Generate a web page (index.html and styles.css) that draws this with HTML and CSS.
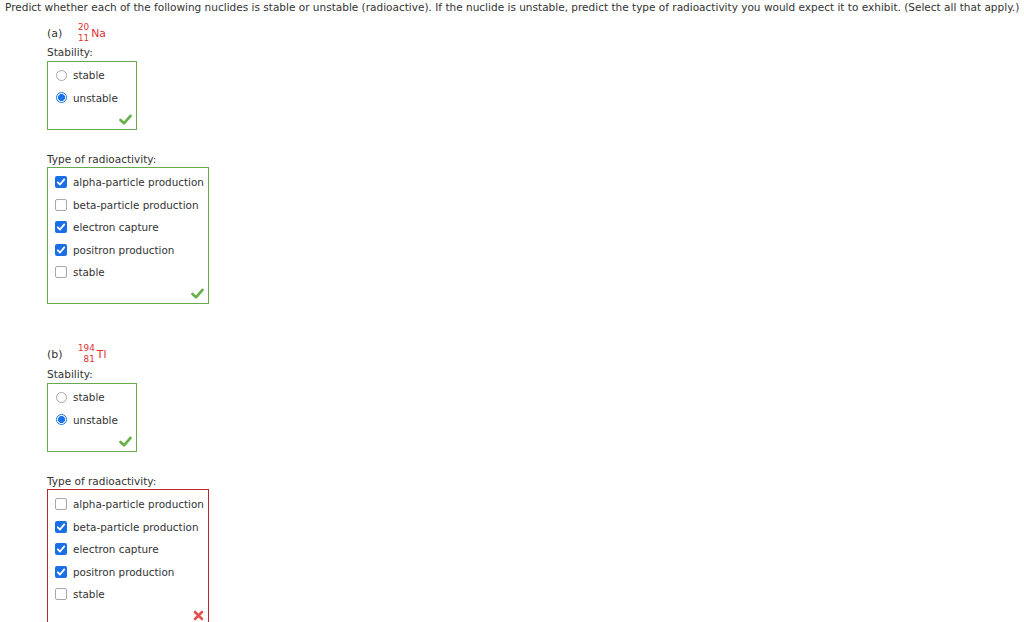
FILE: index.html
```html
<!DOCTYPE html>
<html>
<head>
<meta charset="utf-8">
<link rel="stylesheet" href="styles.css">
</head>
<body>
<p class="prompt">Predict whether each of the following nuclides is stable or unstable (radioactive). If the nuclide is unstable, predict the type of radioactivity you would expect it to exhibit. (Select all that apply.)</p>

<div class="part">
  <div class="part-head">
    <span class="part-label">(a)</span>
    <span class="nuclide"><span class="nums"><span>20</span><span>11</span></span><span class="sym">Na</span></span>
  </div>
  <div class="label">Stability:</div>
  <div class="box box-stab correct">
    <div class="opt"><span class="radio"></span>stable</div>
    <div class="opt"><span class="radio on"></span>unstable</div>
    <div class="mark"><svg width="13" height="11" viewBox="0 0 13 11"><path d="M1.5 6 L5 9.3 L11.5 1.8" fill="none" stroke="#66b04a" stroke-width="2.6" stroke-linecap="round" stroke-linejoin="round"/></svg></div>
  </div>
  <div class="label label-type">Type of radioactivity:</div>
  <div class="box box-type correct">
    <div class="opt"><span class="cb on"></span>alpha-particle production</div>
    <div class="opt"><span class="cb"></span>beta-particle production</div>
    <div class="opt"><span class="cb on"></span>electron capture</div>
    <div class="opt"><span class="cb on"></span>positron production</div>
    <div class="opt"><span class="cb"></span>stable</div>
    <div class="mark"><svg width="13" height="11" viewBox="0 0 13 11"><path d="M1.5 6 L5 9.3 L11.5 1.8" fill="none" stroke="#66b04a" stroke-width="2.6" stroke-linecap="round" stroke-linejoin="round"/></svg></div>
  </div>
</div>

<div class="part part-b">
  <div class="part-head">
    <span class="part-label">(b)</span>
    <span class="nuclide"><span class="nums"><span>194</span><span>81</span></span><span class="sym">Tl</span></span>
  </div>
  <div class="label">Stability:</div>
  <div class="box box-stab correct">
    <div class="opt"><span class="radio"></span>stable</div>
    <div class="opt"><span class="radio on"></span>unstable</div>
    <div class="mark"><svg width="13" height="11" viewBox="0 0 13 11"><path d="M1.5 6 L5 9.3 L11.5 1.8" fill="none" stroke="#66b04a" stroke-width="2.6" stroke-linecap="round" stroke-linejoin="round"/></svg></div>
  </div>
  <div class="label label-type">Type of radioactivity:</div>
  <div class="box box-type wrong">
    <div class="opt"><span class="cb"></span>alpha-particle production</div>
    <div class="opt"><span class="cb on"></span>beta-particle production</div>
    <div class="opt"><span class="cb on"></span>electron capture</div>
    <div class="opt"><span class="cb on"></span>positron production</div>
    <div class="opt"><span class="cb"></span>stable</div>
    <div class="mark"><svg width="11" height="11" viewBox="0 0 11 11"><path d="M2 2 L9 9 M9 2 L2 9" fill="none" stroke="#e4524f" stroke-width="2.6" stroke-linecap="round"/></svg></div>
  </div>
</div>
</body>
</html>
```

FILE: styles.css
```css
html, body {
  margin: 0;
  padding: 0;
  background: #fff;
}
body {
  font-family: "DejaVu Sans", Verdana, sans-serif;
  font-size: 10.52px;
  color: #333;
  padding-left: 5px;
  overflow: hidden;
}
.prompt {
  margin: 0;
  line-height: 15px;
  white-space: nowrap;
}
.part {
  margin-left: 42px;
}
.part-head {
  display: flex;
  align-items: center;
  height: 24px;
  margin-top: 6px;
}
.part-b .part-head {
  margin-top: 38px;
}
.part-b .part-head + .label {
  margin-top: 1px;
}
.part-label {
  width: 31px;
  font-size: 11px;
}
.nuclide {
  display: inline-flex;
  align-items: center;
  color: #e0302f;
}
.nums {
  display: flex;
  flex-direction: column;
  align-items: flex-end;
  font-size: 8.8px;
  line-height: 11px;
  margin-right: 2px;
}
.sym {
  font-size: 10.8px;
}
.label {
  line-height: 14px;
}
.label-type {
  margin-top: 22px;
}
.box {
  border: 1px solid #6aa84f;
  margin-top: 2px;
  padding: 2px 0 0 7px;
  box-sizing: border-box;
}
.label-type + .box {
  margin-top: 1px;
}
.box.correct {
  border-color: #6aa84f;
}
.box.wrong {
  border-color: #b8282e;
}
.box-stab {
  width: 90px;
  height: 69px;
}
.box-type {
  width: 162px;
  height: 137px;
  padding-top: 3px;
}
.opt {
  display: flex;
  align-items: center;
  height: 22.5px;
  font-size: 10.4px;
}
.radio {
  width: 11px;
  height: 11px;
  border-radius: 50%;
  border: 1px solid #a8a8a8;
  box-sizing: border-box;
  margin-left: 1px;
  margin-right: 6px;
  flex: none;
}
.radio.on {
  border-color: #1a73e8;
  background: radial-gradient(circle, #1a73e8 0 3.2px, #fff 3.8px);
}
.cb {
  width: 12px;
  height: 12px;
  border-radius: 2px;
  border: 1px solid #a8a8a8;
  box-sizing: border-box;
  margin-right: 6px;
  flex: none;
}
.cb.on {
  border: none;
  background: #1a6ee6 url("data:image/svg+xml;utf8,<svg xmlns='http://www.w3.org/2000/svg' width='12' height='12' viewBox='0 0 12 12'><path d='M2.8 6.3 L5 8.5 L9.3 3.4' fill='none' stroke='white' stroke-width='1.8' stroke-linecap='round' stroke-linejoin='round'/></svg>") center / 12px 12px no-repeat;
}
.mark {
  height: 20px;
  display: flex;
  align-items: center;
  justify-content: flex-end;
  padding-right: 4px;
}
.box-type .mark {
  height: 19px;
}
.mark svg {
  display: block;
}
```
